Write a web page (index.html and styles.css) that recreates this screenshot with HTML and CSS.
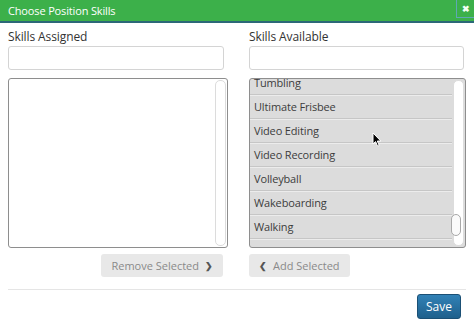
FILE: index.html
```html
<!DOCTYPE html>
<html lang="en">
<head>
    <meta charset="UTF-8">
    <link rel="stylesheet" href="styles.css">
    <title>Choose Position Skills</title>
</head>
<body>
    <div class="modal-header">
        <span class="modal-title">Choose Position Skills</span>
        <span class="close-btn">&#10006;</span>
    </div>

    <div class="modal-body">
        <div class="column">
            <label class="col-label">Skills Assigned</label>
            <input class="filter-input left" type="text">
            <div class="skill-list">
                <div class="list-view" id="assigned-list"></div>
                <div class="scroll-track"></div>
            </div>
            <div class="btn-row end">
                <button class="btn-move">Remove Selected <span class="chev">&#10095;</span></button>
            </div>
        </div>
        <div class="column">
            <label class="col-label">Skills Available</label>
            <input class="filter-input" type="text">
            <div class="skill-list grey">
                <div class="list-view" id="available-list"></div>
                <div class="scroll-track">
                    <div class="scroll-thumb"></div>
                </div>
            </div>
            <div class="btn-row">
                <button class="btn-move"><span class="chev">&#10094;</span> Add Selected</button>
            </div>
        </div>
    </div>

    <div class="modal-footer">
        <button class="btn-save">Save</button>
    </div>

    <svg class="pointer" width="10" height="16" viewBox="0 0 10 16">
        <path d="M1 1 L1 12 L3.6 9.6 L5.6 14.2 L7.2 13.5 L5.3 9 L8.8 9 Z" fill="#000" stroke="#fff" stroke-width="1"/>
    </svg>

    <script>
        const skills = [
            "Running", "Sailing", "Scuba Diving", "Singing", "Skateboarding",
            "Skiing", "Snowboarding", "Soccer", "Softball", "Surfing",
            "Swimming", "Table Tennis", "Tennis", "Track", "Tumbling",
            "Ultimate Frisbee", "Video Editing", "Video Recording", "Volleyball",
            "Wakeboarding", "Walking", "Weightlifting"
        ];

        const list = document.getElementById('available-list');
        skills.forEach(name => {
            const row = document.createElement('div');
            row.className = 'skill-item';
            row.innerText = name;
            list.appendChild(row);
        });

        // keep "Tumbling" just past the top edge, like the scrolled list
        list.scrollTop = skills.indexOf('Tumbling') * 24 + 8;
    </script>
</body>
</html>
```

FILE: styles.css
```css
body {
    margin: 0;
    font-family: 'Open Sans', sans-serif;
    color: #333;
    background: #fff;
    overflow: hidden;
}

.modal-header {
    height: 21px;
    background: #3cb04a;
    border-bottom: 2px solid #2c6878;
    display: flex;
    justify-content: space-between;
    align-items: center;
    padding-left: 8px;
}

.modal-title {
    color: #fff;
    font-size: 11px;
    letter-spacing: -0.15px;
}

.close-btn {
    width: 17px;
    height: 17px;
    align-self: flex-start;
    display: flex;
    align-items: center;
    justify-content: center;
    color: #f4fff4;
    font-size: 9px;
    font-weight: bold;
    border-left: 1px solid #5fa8b4;
    border-bottom: 1px solid #5fa8b4;
}

.modal-body {
    display: grid;
    grid-template-columns: 220px 217px;
    column-gap: 21px;
    padding: 4px 8px 0 8px;
}

.column {
    display: flex;
    flex-direction: column;
}

.col-label {
    font-size: 12px;
    letter-spacing: -0.1px;
    line-height: 19px;
    color: #333;
}

.filter-input {
    height: 24px;
    box-sizing: border-box;
    width: 215px;
    border: 1px solid #d4d4d4;
    border-radius: 3px;
    margin: 0;
}

.filter-input.left {
    width: 216px;
}

.skill-list {
    margin-top: 8px;
    height: 170px;
    box-sizing: border-box;
    border: 1px solid #8e8e8e;
    border-radius: 3px;
    background: #fff;
    display: flex;
}

.skill-list.grey {
    background: #dcdcdc;
}

.list-view {
    flex: 1;
    overflow: hidden;
}

.scroll-track {
    width: 9px;
    margin: 1px 1px 1px 1px;
    background: #fff;
    border: 1px solid #dcdcdc;
    border-radius: 5px;
    display: flex;
    flex-direction: column;
}

.scroll-thumb {
    margin-top: 133px;
    margin-left: -3px;
    width: 8px;
    height: 20px;
    background: #fafafa;
    border: 1px solid #a8a8a8;
    border-radius: 5px;
}

.skill-item {
    height: 24px;
    box-sizing: border-box;
    line-height: 23px;
    padding-left: 4px;
    font-size: 11px;
    letter-spacing: -0.15px;
    color: #3c3c3c;
    border-bottom: 1px solid #c6c6c6;
    box-shadow: inset 0 1px 0 #ececec;
}

.btn-row {
    display: flex;
    margin-top: 6px;
}

.btn-row.end {
    justify-content: flex-end;
    padding-right: 5px;
}

.btn-move {
    height: 23px;
    padding: 0 10px;
    border: none;
    border-radius: 3px;
    background: #e8e8e8;
    color: #8a8a8a;
    font-family: 'Open Sans', sans-serif;
    font-size: 11px;
    display: flex;
    align-items: center;
    gap: 6px;
}

.chev {
    font-size: 9px;
    font-weight: bold;
    color: #555;
}

.modal-footer {
    margin: 12px 8px 0 8px;
    border-top: 1px solid #e5e5e5;
    display: flex;
    justify-content: flex-end;
    padding: 4px 5px 0 0;
}

.btn-save {
    width: 44px;
    height: 25px;
    border: 1px solid #1b5075;
    border-radius: 3px;
    background: linear-gradient(#3181b6, #1f608c);
    color: #fff;
    font-family: 'Open Sans', sans-serif;
    font-size: 12px;
    padding: 0;
}

.pointer {
    position: absolute;
    left: 372px;
    top: 132px;
}
```
